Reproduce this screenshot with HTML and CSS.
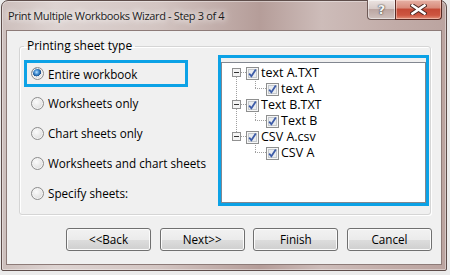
FILE: index.html
```html
<!DOCTYPE html>
<html>
<head>
<meta charset="utf-8">
<title>Print Multiple Workbooks Wizard</title>
<link rel="stylesheet" href="styles.css">
</head>
<body>
<div class="window">
  <div class="titlebar">
    <div class="title">Print Multiple Workbooks Wizard - Step 3 of 4</div>
    <div class="caption-btns">
      <div class="cbtn help">?</div>
      <div class="cbtn close">
        <svg width="17" height="11" viewBox="0 0 17 11">
          <path d="M2.5 1.5 L14.5 9.5 M14.5 1.5 L2.5 9.5" stroke="#4a2620" stroke-width="4.4" stroke-linecap="square"/>
          <path d="M2.5 1.5 L14.5 9.5 M14.5 1.5 L2.5 9.5" stroke="#ffffff" stroke-width="2.6" stroke-linecap="square"/>
        </svg>
      </div>
    </div>
  </div>
  <div class="client">
    <fieldset class="group">
      <legend>Printing sheet type</legend>
      <div class="group-body">
        <div class="options">
          <div class="opt sel"><span class="radio on"></span>Entire workbook</div>
          <div class="opt"><span class="radio"></span>Worksheets only</div>
          <div class="opt"><span class="radio"></span>Chart sheets only</div>
          <div class="opt"><span class="radio"></span>Worksheets and chart sheets</div>
          <div class="opt"><span class="radio"></span>Specify sheets:</div>
        </div>
        <div class="tree-frame">
          <div class="tree">
            <div class="trow">
              <svg class="gut" width="18" height="16" viewBox="0 0 18 16"><path d="M8.5 12 V16" stroke="#a0a0a0" stroke-dasharray="1 1"/><path d="M13 7.5 H18" stroke="#a0a0a0" stroke-dasharray="1 1"/><rect x="4.5" y="3.5" width="8" height="8" fill="#f4f4f4" stroke="#919191"/><path d="M6 7.5 H11" stroke="#333"/></svg>
              <svg class="cb" width="13" height="13" viewBox="0 0 13 13"><rect x="0.5" y="0.5" width="12" height="12" fill="#f6f6f6" stroke="#8e8f8f"/><rect x="2.5" y="2.5" width="8" height="8" fill="#e9ecef" stroke="#c5c9cd"/><path d="M3.2 6.6 L5.4 9.3 L9.8 2.6" fill="none" stroke="#3d5ca8" stroke-width="1.8"/></svg>
              <span class="tl">text A.TXT</span>
            </div>
            <div class="trow">
              <svg class="gut" width="18" height="16" viewBox="0 0 18 16"><path d="M8.5 0 V16" stroke="#a0a0a0" stroke-dasharray="1 1"/></svg>
              <svg class="gut2" width="20" height="16" viewBox="0 0 20 16"><path d="M9.5 0 V8 M9 7.5 H20" stroke="#a0a0a0" stroke-dasharray="1 1"/></svg>
              <svg class="cb" width="13" height="13" viewBox="0 0 13 13"><rect x="0.5" y="0.5" width="12" height="12" fill="#f6f6f6" stroke="#8e8f8f"/><rect x="2.5" y="2.5" width="8" height="8" fill="#e9ecef" stroke="#c5c9cd"/><path d="M3.2 6.6 L5.4 9.3 L9.8 2.6" fill="none" stroke="#3d5ca8" stroke-width="1.8"/></svg>
              <span class="tl">text A</span>
            </div>
            <div class="trow">
              <svg class="gut" width="18" height="16" viewBox="0 0 18 16"><path d="M8.5 0 V4 M8.5 12 V16" stroke="#a0a0a0" stroke-dasharray="1 1"/><path d="M13 7.5 H18" stroke="#a0a0a0" stroke-dasharray="1 1"/><rect x="4.5" y="3.5" width="8" height="8" fill="#f4f4f4" stroke="#919191"/><path d="M6 7.5 H11" stroke="#333"/></svg>
              <svg class="cb" width="13" height="13" viewBox="0 0 13 13"><rect x="0.5" y="0.5" width="12" height="12" fill="#f6f6f6" stroke="#8e8f8f"/><rect x="2.5" y="2.5" width="8" height="8" fill="#e9ecef" stroke="#c5c9cd"/><path d="M3.2 6.6 L5.4 9.3 L9.8 2.6" fill="none" stroke="#3d5ca8" stroke-width="1.8"/></svg>
              <span class="tl">Text B.TXT</span>
            </div>
            <div class="trow">
              <svg class="gut" width="18" height="16" viewBox="0 0 18 16"><path d="M8.5 0 V16" stroke="#a0a0a0" stroke-dasharray="1 1"/></svg>
              <svg class="gut2" width="20" height="16" viewBox="0 0 20 16"><path d="M9.5 0 V8 M9 7.5 H20" stroke="#a0a0a0" stroke-dasharray="1 1"/></svg>
              <svg class="cb" width="13" height="13" viewBox="0 0 13 13"><rect x="0.5" y="0.5" width="12" height="12" fill="#f6f6f6" stroke="#8e8f8f"/><rect x="2.5" y="2.5" width="8" height="8" fill="#e9ecef" stroke="#c5c9cd"/><path d="M3.2 6.6 L5.4 9.3 L9.8 2.6" fill="none" stroke="#3d5ca8" stroke-width="1.8"/></svg>
              <span class="tl">Text B</span>
            </div>
            <div class="trow">
              <svg class="gut" width="18" height="16" viewBox="0 0 18 16"><path d="M8.5 0 V4" stroke="#a0a0a0" stroke-dasharray="1 1"/><path d="M13 7.5 H18" stroke="#a0a0a0" stroke-dasharray="1 1"/><rect x="4.5" y="3.5" width="8" height="8" fill="#f4f4f4" stroke="#919191"/><path d="M6 7.5 H11" stroke="#333"/></svg>
              <svg class="cb" width="13" height="13" viewBox="0 0 13 13"><rect x="0.5" y="0.5" width="12" height="12" fill="#f6f6f6" stroke="#8e8f8f"/><rect x="2.5" y="2.5" width="8" height="8" fill="#e9ecef" stroke="#c5c9cd"/><path d="M3.2 6.6 L5.4 9.3 L9.8 2.6" fill="none" stroke="#3d5ca8" stroke-width="1.8"/></svg>
              <span class="tl">CSV A.csv</span>
            </div>
            <div class="trow">
              <svg class="gut" width="18" height="16" viewBox="0 0 18 16"></svg>
              <svg class="gut2" width="20" height="16" viewBox="0 0 20 16"><path d="M9.5 0 V8 M9 7.5 H20" stroke="#a0a0a0" stroke-dasharray="1 1"/></svg>
              <svg class="cb" width="13" height="13" viewBox="0 0 13 13"><rect x="0.5" y="0.5" width="12" height="12" fill="#f6f6f6" stroke="#8e8f8f"/><rect x="2.5" y="2.5" width="8" height="8" fill="#e9ecef" stroke="#c5c9cd"/><path d="M3.2 6.6 L5.4 9.3 L9.8 2.6" fill="none" stroke="#3d5ca8" stroke-width="1.8"/></svg>
              <span class="tl">CSV A</span>
            </div>
          </div>
        </div>
      </div>
    </fieldset>
    <div class="buttons">
      <div class="btn">&lt;&lt;Back</div>
      <div class="btn">Next&gt;&gt;</div>
      <div class="btn">Finish</div>
      <div class="btn">Cancel</div>
    </div>
  </div>
</div>
</body>
</html>
```

FILE: styles.css
```css
* { box-sizing: border-box; }
html, body { margin: 0; padding: 0; }
body {
  width: 450px;
  height: 275px;
  overflow: hidden;
  background: #ebebeb;
  font-family: "Open Sans", "Segoe UI", sans-serif;
  font-size: 11.7px;
  color: #000;
}
.window {
  margin-left: 1px;
  width: 446px;
  height: 271px;
  border: 1px solid #5e4d4a;
  border-radius: 7px 7px 2px 2px;
  background: linear-gradient(to right, #cdbfbc 0%, #ddd3d1 12%, #d3c5c2 35%, #b59d99 58%, #cdbcb9 72%, #c2aca8 88%, #bba4a0 100%);
  box-shadow: inset 0 0 0 1px rgba(255, 255, 255, 0.4);
  display: flex;
  flex-direction: column;
}
.titlebar {
  height: 29px;
  flex: none;
  display: flex;
  justify-content: space-between;
  align-items: flex-start;
  padding-left: 6px;
}
.title {
  line-height: 29px;
  font-size: 11px;
  letter-spacing: -0.35px;
  color: #1c1c1c;
  text-shadow: 0 0 6px #fff, 0 0 10px #fff;
}
.caption-btns {
  display: flex;
  margin-right: 4px;
}
.cbtn {
  height: 20px;
  margin-top: -1px;
  display: flex;
  align-items: center;
  justify-content: center;
}
.help {
  width: 28px;
  border: 1px solid #6e5956;
  border-top: none;
  border-right: none;
  border-radius: 0 0 0 4px;
  background: linear-gradient(#ece4e2 0%, #d8cbc8 45%, #bca6a2 50%, #cfc0bd 100%);
  box-shadow: inset 0 0 0 1px rgba(255, 255, 255, 0.5);
  color: #f4f4f4;
  font-family: "DejaVu Sans", sans-serif;
  font-weight: bold;
  font-size: 13px;
  text-shadow: 0 0 1px #333, 0 0 2px #444;
}
.close {
  width: 47px;
  border: 1px solid #5a2b24;
  border-top: none;
  border-radius: 0 0 4px 0;
  background: linear-gradient(#e6b1a5 0%, #d98c7c 40%, #c54a36 50%, #cd5641 80%, #e28e77 100%);
  box-shadow: inset 0 0 0 1px rgba(255, 230, 220, 0.45);
}
.client {
  flex: none;
  margin: 0 4px;
  height: 235px;
  border: 1px solid #8d7b78;
  background: #f0f0f0;
}
.group {
  margin: 8px 0 0 12px;
  width: 412px;
  min-width: 0;
  padding: 2px 1px 6px 4px;
  border: 1px solid #d5d5d5;
  border-radius: 3px;
  box-shadow: inset 1px 1px 0 #fff, 1px 1px 0 #fff;
}
.group legend {
  padding: 0 3px;
  line-height: 14px;
  font-size: 12px;
}
.group-body {
  display: grid;
  grid-template-columns: 164px 211px;
  column-gap: 30px;
  align-items: start;
}
.options {
  margin-top: 3px;
}
.opt {
  height: 30px;
  display: flex;
  align-items: center;
  padding-left: 7px;
  white-space: nowrap;
}
.opt.sel {
  height: 27px;
  margin: 2px 0 1px;
  padding-left: 4px;
  border: 3px solid #0ca2e6;
}
.radio {
  width: 13px;
  height: 13px;
  flex: none;
  margin-right: 4px;
  border-radius: 50%;
  border: 1px solid #8c8c8c;
  background: radial-gradient(circle at 40% 35%, #fbfbfb 0%, #e6e6e6 55%, #cfcfcf 100%);
  box-shadow: inset 0 0 0 1px #f4f4f4;
}
.radio.on {
  background:
    radial-gradient(circle at 42% 38%, #bfe3ff 0%, #3c8ad0 25%, #1b4f8a 45%, rgba(27, 79, 138, 0) 47%),
    radial-gradient(circle at 40% 35%, #fbfbfb 0%, #e6e6e6 55%, #cfcfcf 100%);
}
.tree-frame {
  width: 211px;
  height: 151px;
  border: 3px solid #0ca2e6;
  padding-top: 4px;
  display: flex;
  flex-direction: column;
}
.tree {
  flex: 1;
  border: 1px solid #828790;
  background: #fff;
  padding: 2px 0 0 6px;
}
.trow {
  height: 16px;
  display: flex;
  align-items: center;
}
.trow svg { flex: none; display: block; }
.tl {
  margin-left: 2px;
  white-space: nowrap;
  line-height: 16px;
  font-size: 12.5px;
}
.buttons {
  display: flex;
  justify-content: flex-end;
  gap: 8.67px;
  margin-top: 13px;
  padding-right: 9px;
}
.btn {
  width: 85px;
  height: 23px;
  border: 1px solid #707070;
  border-radius: 3px;
  background: linear-gradient(#f2f2f2 0%, #ebebeb 50%, #dddddd 51%, #cfcfcf 100%);
  box-shadow: inset 0 0 0 1px #fbfbfb;
  display: flex;
  align-items: center;
  justify-content: center;
  line-height: 1;
}
```
